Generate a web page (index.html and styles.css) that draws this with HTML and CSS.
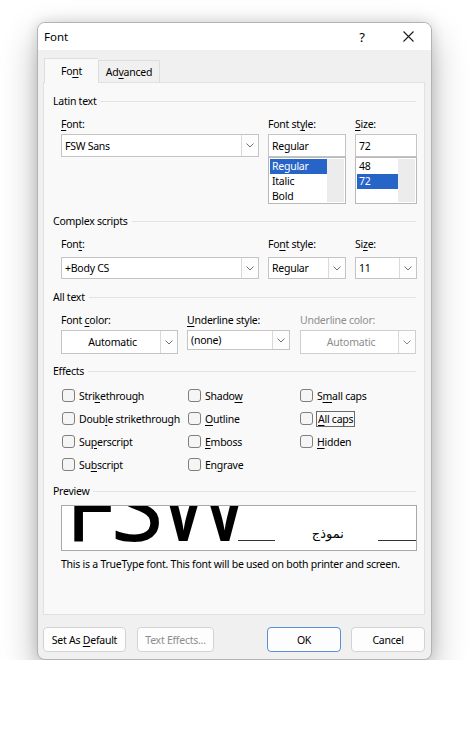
FILE: index.html
```html
<!DOCTYPE html>
<html lang="en">
<head>
<meta charset="utf-8">
<title>Font</title>
<link rel="stylesheet" href="styles.css">
</head>
<body>
<div class="window">
  <div class="titlebar">
    <span class="title">Font</span>
    <span class="tb-btn help">?</span>
    <span class="tb-btn close"><svg width="11" height="11" viewBox="0 0 11 11"><path d="M0.5 0.5L10.5 10.5M10.5 0.5L0.5 10.5" stroke="#1b1b1b" stroke-width="1.1" fill="none"/></svg></span>
  </div>
  <div class="client">
    <div class="tabs">
      <div class="tab active"><span>Fo<u>n</u>t</span></div>
      <div class="tab"><span>Ad<u>v</u>anced</span></div>
    </div>
    <div class="panel">
      <div class="group-title"><span>Latin text</span><i></i></div>
      <div class="grid latin">
        <div class="field">
          <div class="label"><u>F</u>ont:</div>
          <div class="combo h23"><span class="val">FSW Sans</span><span class="dd"><svg width="8" height="5" viewBox="0 0 8 5"><path d="M0.5 0.5L4 4L7.5 0.5" fill="none" stroke="#707070"/></svg></span></div>
        </div>
        <div class="field">
          <div class="label">Font st<u>y</u>le:</div>
          <div class="textbox h23">Regular</div>
          <div class="list">
            <div class="items">
              <div class="item sel">Regular</div>
              <div class="item">Italic</div>
              <div class="item">Bold</div>
            </div>
            <div class="sbar"></div>
          </div>
        </div>
        <div class="field">
          <div class="label"><u>S</u>ize:</div>
          <div class="textbox h23">72</div>
          <div class="list">
            <div class="items">
              <div class="item">48</div>
              <div class="item sel">72</div>
            </div>
            <div class="sbar"></div>
          </div>
        </div>
      </div>

      <div class="group-title mt9"><span>Complex scripts</span><i></i></div>
      <div class="grid latin">
        <div class="field">
          <div class="label">Fon<u>t</u>:</div>
          <div class="combo h22 mt3"><span class="val">+Body CS</span><span class="dd"><svg width="8" height="5" viewBox="0 0 8 5"><path d="M0.5 0.5L4 4L7.5 0.5" fill="none" stroke="#707070"/></svg></span></div>
        </div>
        <div class="field">
          <div class="label">Fo<u>n</u>t style:</div>
          <div class="combo h22 mt3"><span class="val">Regular</span><span class="dd"><svg width="8" height="5" viewBox="0 0 8 5"><path d="M0.5 0.5L4 4L7.5 0.5" fill="none" stroke="#707070"/></svg></span></div>
        </div>
        <div class="field">
          <div class="label">Si<u>z</u>e:</div>
          <div class="combo h22 mt3"><span class="val">11</span><span class="dd"><svg width="8" height="5" viewBox="0 0 8 5"><path d="M0.5 0.5L4 4L7.5 0.5" fill="none" stroke="#707070"/></svg></span></div>
        </div>
      </div>

      <div class="group-title mt10"><span>All text</span><i></i></div>
      <div class="grid alltext">
        <div class="field">
          <div class="label">Font <u>c</u>olor:</div>
          <div class="combo h24"><span class="val center">Automatic</span><span class="dd"><svg width="8" height="5" viewBox="0 0 8 5"><path d="M0.5 0.5L4 4L7.5 0.5" fill="none" stroke="#707070"/></svg></span></div>
        </div>
        <div class="field">
          <div class="label"><u>U</u>nderline style:</div>
          <div class="combo h20"><span class="val">(none)</span><span class="dd"><svg width="8" height="5" viewBox="0 0 8 5"><path d="M0.5 0.5L4 4L7.5 0.5" fill="none" stroke="#707070"/></svg></span></div>
        </div>
        <div class="field">
          <div class="label disabled">Underline color:</div>
          <div class="combo h24 dis"><span class="val center">Automatic</span><span class="dd"><svg width="8" height="5" viewBox="0 0 8 5"><path d="M0.5 0.5L4 4L7.5 0.5" fill="none" stroke="#8a8a8a"/></svg></span></div>
        </div>
      </div>

      <div class="group-title mt9"><span>Effects</span><i></i></div>
      <div class="effects">
        <div class="chk"><span class="box"></span><span>Stri<u>k</u>ethrough</span></div>
        <div class="chk"><span class="box"></span><span>Shado<u>w</u></span></div>
        <div class="chk"><span class="box"></span><span>S<u>m</u>all caps</span></div>
        <div class="chk"><span class="box"></span><span>Doub<u>l</u>e strikethrough</span></div>
        <div class="chk"><span class="box"></span><span><u>O</u>utline</span></div>
        <div class="chk"><span class="box"></span><span class="focus"><u>A</u>ll caps</span></div>
        <div class="chk"><span class="box"></span><span>Su<u>p</u>erscript</span></div>
        <div class="chk"><span class="box"></span><span><u>E</u>mboss</span></div>
        <div class="chk"><span class="box"></span><span><u>H</u>idden</span></div>
        <div class="chk"><span class="box"></span><span>Su<u>b</u>script</span></div>
        <div class="chk"><span class="box"></span><span>En<u>g</u>rave</span></div>
        <div></div>
      </div>

      <div class="group-title mt7"><span>Preview</span><i></i></div>
      <div class="preview">
        <span class="big">FSW</span>
        <span class="uline u1"></span>
        <span class="arabic" dir="rtl" lang="ar">نموذج</span>
        <span class="uline u2"></span>
      </div>
      <div class="info">This is a TrueType font. This font will be used on both printer and screen.</div>
    </div>
    <div class="buttons">
      <div class="btn w83"><span>Set As <u>D</u>efault</span></div>
      <div class="btn w77 disabled"><span>Text Effects...</span></div>
      <div class="spacer"></div>
      <div class="btn w74 default"><span>OK</span></div>
      <div class="btn w74"><span>Cancel</span></div>
    </div>
  </div>
</div>
</body>
</html>
```

FILE: styles.css
```css
* { box-sizing: border-box; }
html, body { margin: 0; background: #ffffff; }
body {
  font-family: "Noto Sans", "Open Sans", sans-serif;
  font-size: 10.5px;
  letter-spacing: -0.25px;
  line-height: 16px;
  color: #000;
}
u { text-decoration-thickness: 1px; text-underline-offset: 2px; }

.window {
  margin: 22px 0 0 37px;
  width: 395px;
  height: 638px;
  border: 1px solid #b3b3b3;
  border-radius: 8px;
  overflow: hidden;
  background: #f0f0f0;
  display: flex;
  flex-direction: column;
  box-shadow: 0 16px 36px rgba(0,0,0,0.28), 0 0 14px rgba(0,0,0,0.14);
}

.titlebar {
  height: 27px;
  background: #ffffff;
  display: flex;
  align-items: center;
  padding-left: 6px;
  flex: none;
}
.title { font-size: 11.5px; letter-spacing: 0; }
.tb-btn {
  width: 46px;
  height: 27px;
  display: flex;
  align-items: center;
  justify-content: center;
  font-size: 13px;
}
.help { margin-left: auto; }

.client {
  flex: 1;
  display: flex;
  flex-direction: column;
  padding: 8px 6px 7px 5px;
}

.tabs { display: flex; align-items: flex-end; padding-left: 1px; height: 24px; position: relative; z-index: 1; }
.tab {
  height: 22px;
  border: 1px solid #dedede;
  border-bottom: none;
  background: #f0f0f0;
  display: flex;
  align-items: center;
  justify-content: center;
  width: 62px;
}
.tab.active {
  height: 25px;
  width: 54px;
  margin-bottom: -1px;
  background: #f9f9f9;
  border-right: none;
}

.panel {
  flex: 1;
  background: #f9f9f9;
  border: 1px solid #e1e1e1;
  padding: 10px 7px 0 9px;
}

.group-title {
  display: flex;
  align-items: center;
  gap: 4px;
  height: 16px;
  margin-right: 1px;
}
.group-title i { flex: 1; height: 1px; background: #e3e3e3; }
.mt7 { margin-top: 7px; }
.mt9 { margin-top: 9px; }
.mt10 { margin-top: 10px; }
.mt3 { margin-top: 3px !important; }

.grid { display: grid; margin-left: 8px; margin-top: 7px; }
.latin { grid-template-columns: 198px 78px 62px; column-gap: 9px; }
.alltext { grid-template-columns: 117px 103px 117px; column-gap: 9px; }
.alltext .field:nth-child(3) { margin-left: 1px; }

.field { display: flex; flex-direction: column; }
.label { height: 16px; margin-bottom: 2px; }
.label.disabled { color: #8d8d8d; }

.h20 { height: 20px; }
.h22 { height: 22px; }
.h23 { height: 23px; }
.h24 { height: 24px; }

.combo {
  display: flex;
  background: #ffffff;
  border: 1px solid #c4c4c4;
}
.combo .val {
  flex: 1;
  display: flex;
  align-items: center;
  padding-left: 3px;
}
.combo .val.center { justify-content: center; }
.combo .dd {
  width: 17px;
  border-left: 1px solid #d9d9d9;
  display: flex;
  align-items: center;
  justify-content: center;
  background: #fdfdfd;
}
.combo.dis { border-color: #cfcfcf; }
.combo.dis .val { color: #8d8d8d; }

.textbox {
  background: #fff;
  border: 1px solid #c4c4c4;
  display: flex;
  align-items: center;
  padding-left: 3px;
}
.list {
  height: 47px;
  background: #fff;
  border: 1px solid #b9b9b9;
  display: flex;
  padding: 1px;
}
.items { flex: 1; }
.item { height: 15px; line-height: 15px; padding-left: 2px; }
.item.sel { background: #2664c8; color: #fff; }
.sbar { width: 17px; background: #ececec; }

.effects {
  display: grid;
  grid-template-columns: 126px 112px 1fr;
  grid-auto-rows: 23px;
  margin-left: 8px;
  margin-top: 5px;
}
.chk { display: flex; align-items: center; padding-left: 1px; white-space: nowrap; }
.chk .box {
  width: 13px;
  height: 13px;
  border: 1px solid #7f7f7f;
  border-radius: 3px;
  background: #f5f5f5;
  margin-right: 4px;
  flex: none;
}
.chk .focus {
  border: 1px solid #6a6a6a;
  padding: 0 1px;
  margin-left: -1px;
  line-height: 14px;
}

.preview {
  margin: 6px 0 0 8px;
  height: 46px;
  background: #ffffff;
  border: 1px solid #a9a9a9;
  overflow: hidden;
  display: flex;
  align-items: flex-end;
  padding-left: 3px;
}
.big {
  font-family: "Noto Sans", sans-serif;
  font-size: 96px;
  line-height: 96px;
  height: 96px;
  letter-spacing: -4px;
  margin-bottom: -2px;
  flex: none;
}
.uline { height: 1px; background: #333; margin-bottom: 9px; flex: none; }
.u1 { width: 37px; margin-left: -7px; }
.arabic {
  font-family: "DejaVu Sans", sans-serif;
  font-size: 13px;
  letter-spacing: 0;
  line-height: 16px;
  margin: 0 0 8px 37px;
  flex: none;
}
.u2 { margin-left: auto; width: 38px; }

.info { margin: 5px 0 0 8px; white-space: nowrap; }

.buttons { display: flex; margin-top: 12px; height: 25px; }
.btn {
  height: 25px;
  background: #fdfdfd;
  border: 1px solid #d3d3d3;
  border-radius: 4px;
  display: flex;
  align-items: center;
  justify-content: center;
}
.btn.disabled { color: #8d8d8d; }
.btn.default { border-color: #5b8fd6; }
.w83 { width: 83px; margin-right: 11px; }
.w77 { width: 77px; }
.w74 { width: 74px; }
.w74 + .w74 { margin-left: 10px; }
.spacer { flex: 1; }
```
